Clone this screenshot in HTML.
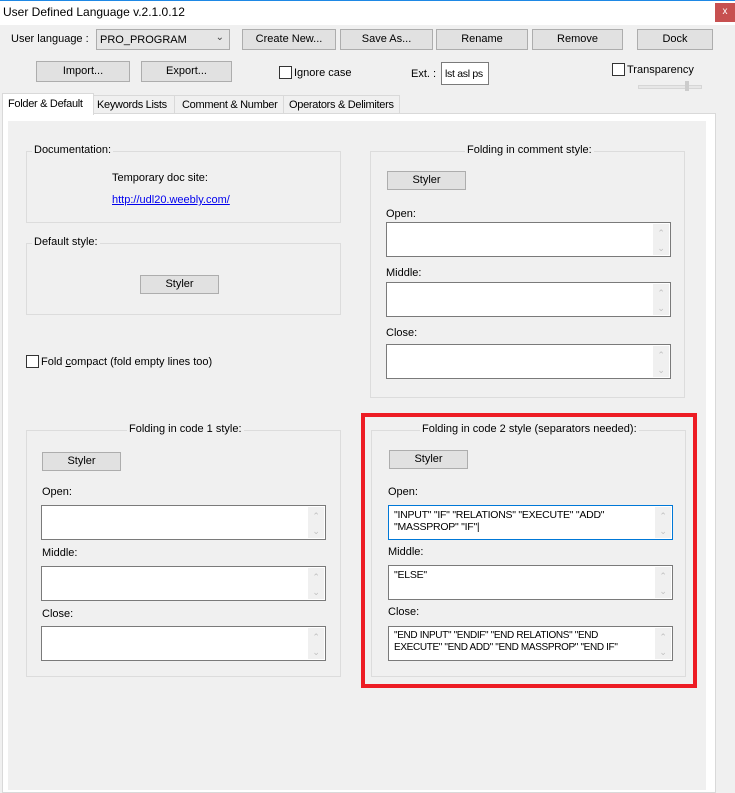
<!DOCTYPE html>
<html><head><style>
*{box-sizing:border-box;margin:0;padding:0}
body{width:735px;height:790px;background:#f0f0f0;font-family:"Liberation Sans",sans-serif;font-size:11px;color:#000;position:relative;overflow:hidden}
.a{position:absolute}
.t{position:absolute;white-space:nowrap;line-height:13px}
.btn{position:absolute;background:#e1e1e1;border:1px solid #adadad;text-align:center;line-height:19px;font-size:11px}
.grp{position:absolute;border:1px solid #dcdcdc}
.gl{position:absolute;top:-8px;background:#f0f0f0;padding:0 2px;white-space:nowrap;line-height:13px}
.box{position:absolute;background:#fff;border:1px solid #7a7a7a;font-size:10.5px;letter-spacing:-0.25px;line-height:12px;padding:3px 0 0 5px;white-space:nowrap;overflow:hidden}
.sb{position:absolute;right:1px;top:1px;bottom:1px;width:16px;background:#f0f0f0;color:#c0c0c0;font-size:9px;text-align:center}
.sb span{position:absolute;left:3px;width:10px;height:10px}
.cb{position:absolute;width:13px;height:13px;border:1px solid #333;background:#fff}
</style></head><body>
<div class="a" style="left:0;top:0;width:735px;height:25px;background:#fff;border-top:1px solid #1e88e5"></div>
<div class="t" style="left:3px;top:6px;font-size:12px">User Defined Language v.2.1.0.12</div>
<div class="a" style="left:715px;top:3px;width:20px;height:19px;background:#c75050;color:#fff;font-size:10px;text-align:center;line-height:18px">x</div>

<div class="t" style="left:11px;top:33px">User language :</div>
<div class="a" style="left:96px;top:29px;width:134px;height:21px;background:#e5e5e5;border:1px solid #acacac;padding:4px 0 0 3px">PRO_PROGRAM<span style="position:absolute;right:5px;top:2px;font-size:10px;color:#444">&#8964;</span></div>
<div class="btn" style="left:242px;top:29px;width:94px;height:21px">Create New...</div>
<div class="btn" style="left:340px;top:29px;width:93px;height:21px">Save As...</div>
<div class="btn" style="left:436px;top:29px;width:92px;height:21px">Rename</div>
<div class="btn" style="left:532px;top:29px;width:91px;height:21px">Remove</div>
<div class="btn" style="left:637px;top:29px;width:76px;height:21px">Dock</div>

<div class="btn" style="left:36px;top:61px;width:94px;height:21px">Import...</div>
<div class="btn" style="left:141px;top:61px;width:91px;height:21px">Export...</div>
<div class="cb" style="left:279px;top:66px"></div><div class="t" style="left:294px;top:67px">Ignore case</div>
<div class="t" style="left:411px;top:68px">Ext. :</div>
<div class="a" style="left:441px;top:62px;width:48px;height:23px;background:#fff;border:1px solid #7a7a7a;padding:5px 0 0 3px;font-size:10.5px;letter-spacing:-0.3px;white-space:nowrap;overflow:hidden">lst asl ps</div>
<div class="cb" style="left:612px;top:63px"></div><div class="t" style="left:627px;top:64px">Transparency</div>
<div class="a" style="left:638px;top:85px;width:64px;height:4px;background:#e7e7e7;border:1px solid #d6d6d6"></div>
<div class="a" style="left:685px;top:81px;width:4px;height:10px;background:#ccc"></div>

<div class="a" style="left:2px;top:113px;width:714px;height:680px;background:#fff;border:1px solid #d9d9d9"></div>
<div class="a" style="left:93px;top:95px;width:82px;height:19px;background:#f0f0f0;border:1px solid #d9d9d9"></div>
<div class="a" style="left:174px;top:95px;width:110px;height:19px;background:#f0f0f0;border:1px solid #d9d9d9"></div>
<div class="a" style="left:283px;top:95px;width:117px;height:19px;background:#f0f0f0;border:1px solid #d9d9d9"></div>
<div class="a" style="left:2px;top:93px;width:92px;height:22px;background:#fff;border:1px solid #d9d9d9;border-bottom:none"></div>
<div class="t" style="left:8px;top:98px;letter-spacing:-0.3px">Folder &amp; Default</div>
<div class="t" style="left:97px;top:99px;letter-spacing:-0.3px">Keywords Lists</div>
<div class="t" style="left:182px;top:99px;letter-spacing:-0.3px">Comment &amp; Number</div>
<div class="t" style="left:289px;top:99px;letter-spacing:-0.3px">Operators &amp; Delimiters</div>

<div class="a" style="left:8px;top:121px;width:698px;height:669px;background:#f0f0f0"></div>

<div class="grp" style="left:26px;top:151px;width:315px;height:72px"><div class="gl" style="left:5px">Documentation:</div></div>
<div class="t" style="left:112px;top:172px">Temporary doc site:</div>
<div class="t" style="left:112px;top:194px;color:#0000ee;text-decoration:underline">http://udl20.weebly.com/</div>

<div class="grp" style="left:26px;top:243px;width:315px;height:72px"><div class="gl" style="left:5px">Default style:</div></div>
<div class="btn" style="left:140px;top:275px;width:79px;height:19px;line-height:17px">Styler</div>

<div class="cb" style="left:26px;top:355px"></div><div class="t" style="left:41px;top:356px">Fold <u>c</u>ompact (fold empty lines too)</div>

<div class="grp" style="left:370px;top:151px;width:315px;height:247px"><div class="gl" style="left:94px">Folding in comment style:</div></div>
<div class="btn" style="left:387px;top:171px;width:79px;height:19px;line-height:17px">Styler</div>
<div class="t" style="left:386px;top:208px">Open:</div>
<div class="box" style="left:386px;top:222px;width:285px;height:35px"><div class="sb"><span style="top:3px">&#8963;</span><span style="top:18px">&#8964;</span></div></div>
<div class="t" style="left:386px;top:267px">Middle:</div>
<div class="box" style="left:386px;top:282px;width:285px;height:35px"><div class="sb"><span style="top:3px">&#8963;</span><span style="top:18px">&#8964;</span></div></div>
<div class="t" style="left:386px;top:327px">Close:</div>
<div class="box" style="left:386px;top:344px;width:285px;height:35px"><div class="sb"><span style="top:3px">&#8963;</span><span style="top:18px">&#8964;</span></div></div>

<div class="grp" style="left:26px;top:430px;width:315px;height:247px"><div class="gl" style="left:100px">Folding in code 1 style:</div></div>
<div class="btn" style="left:42px;top:452px;width:79px;height:19px;line-height:17px">Styler</div>
<div class="t" style="left:42px;top:486px">Open:</div>
<div class="box" style="left:41px;top:505px;width:285px;height:35px"><div class="sb"><span style="top:3px">&#8963;</span><span style="top:18px">&#8964;</span></div></div>
<div class="t" style="left:42px;top:547px">Middle:</div>
<div class="box" style="left:41px;top:566px;width:285px;height:35px"><div class="sb"><span style="top:3px">&#8963;</span><span style="top:18px">&#8964;</span></div></div>
<div class="t" style="left:42px;top:608px">Close:</div>
<div class="box" style="left:41px;top:626px;width:285px;height:35px"><div class="sb"><span style="top:3px">&#8963;</span><span style="top:18px">&#8964;</span></div></div>

<div class="grp" style="left:371px;top:430px;width:315px;height:247px"><div class="gl" style="left:48px">Folding in code 2 style (separators needed):</div></div>
<div class="btn" style="left:389px;top:450px;width:79px;height:19px;line-height:17px">Styler</div>
<div class="t" style="left:388px;top:486px">Open:</div>
<div class="box" style="left:388px;top:505px;width:285px;height:35px;border-color:#0078d7">"INPUT" "IF" "RELATIONS" "EXECUTE" "ADD"<br>"MASSPROP" "IF"|<div class="sb"><span style="top:3px">&#8963;</span><span style="top:18px">&#8964;</span></div></div>
<div class="t" style="left:388px;top:546px">Middle:</div>
<div class="box" style="left:388px;top:565px;width:285px;height:35px">"ELSE"<div class="sb"><span style="top:3px">&#8963;</span><span style="top:18px">&#8964;</span></div></div>
<div class="t" style="left:388px;top:606px">Close:</div>
<div class="box" style="left:388px;top:626px;width:285px;height:35px;font-size:10px;letter-spacing:-0.35px">"END INPUT" "ENDIF" "END RELATIONS" "END<br>EXECUTE" "END ADD" "END MASSPROP" "END IF"<div class="sb"><span style="top:3px">&#8963;</span><span style="top:18px">&#8964;</span></div></div>

<div class="a" style="left:361px;top:413px;width:336px;height:275px;border:4px solid #ed1c24"></div>
</body></html>
